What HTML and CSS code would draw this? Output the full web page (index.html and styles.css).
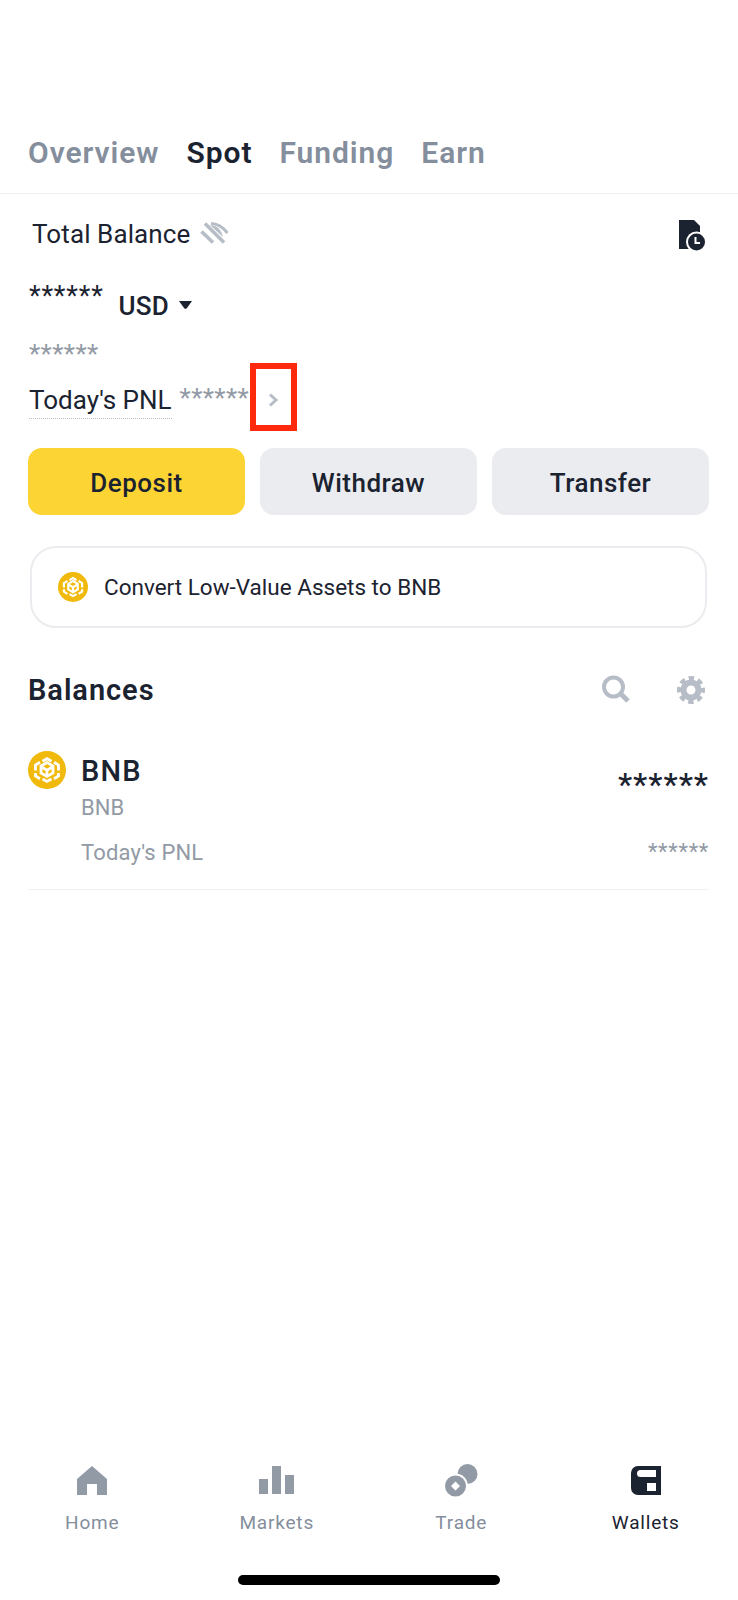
FILE: index.html
```html
<!DOCTYPE html>
<html lang="en">
<head>
    <meta charset="UTF-8">
    <meta name="viewport" content="width=device-width, initial-scale=1.0">
    <title>Wallets</title>
    <link rel="stylesheet" href="styles.css">
</head>
<body>
    <svg class="defs" width="0" height="0">
        <symbol id="bnb" viewBox="0 0 38 38">
            <circle cx="19" cy="19" r="19" fill="#f0b90b"/>
            <g fill="none" stroke="#fff" stroke-width="2.800">
                <path d="M14.500 10.300 19 7.700l4.500 2.600"/>
                <path d="M26 11.300l4.500 2.700v5.500"/>
                <path d="M12 11.300l-4.500 2.700v5.500"/>
                <path d="M7.500 22v3l4.500 2.700"/>
                <path d="M30.500 22v3l-4.500 2.700"/>
                <path d="M14.500 28l4.500 2.500 4.500-2.500"/>
                <path d="M13 15l6-3.500 6 3.500v7l-6 3.500-6-3.500z"/>
                <path d="M13.500 16l5.500 3.200 5.500-3.200M19 19.200V25"/>
            </g>
        </symbol>
    </svg>

    <div class="page">
        <!-- tabs -->
        <div class="tabs">
            <span class="tab">Overview</span>
            <span class="tab active">Spot</span>
            <span class="tab">Funding</span>
            <span class="tab">Earn</span>
        </div>

        <!-- balance -->
        <div class="balance">
            <div class="total-row">
                <div class="total-label">
                    <span>Total Balance</span>
                    <svg class="eye" width="29" height="24" viewBox="0 0 29 24">
                        <g fill="none" stroke="#b7bdc6">
                            <path d="M5 1.500 24 20.500" stroke-width="3.600"/>
                            <path d="M1.500 9.500 13 20.500" stroke-width="3.600"/>
                            <path d="M11 1.500Q20 1.500 27.500 11" stroke-width="3"/>
                        </g>
                        <path d="M10 3Q20 3 23 15z" fill="#b7bdc6"/>
                    </svg>
                </div>
                <svg class="doc" width="27" height="31" viewBox="0 0 27 31">
                    <path d="M0 0H15L21 6V29H0Z" fill="#1b2230"/>
                    <circle cx="17.500" cy="22" r="10.500" fill="#fff"/>
                    <circle cx="17.500" cy="22" r="8.500" fill="#1b2230"/>
                    <path d="M16.500 17V23H21" fill="none" stroke="#fff" stroke-width="2"/>
                </svg>
            </div>
            <div class="amount-row">
                <span class="stars">******</span>
                <span class="currency">USD</span>
                <svg class="caret" width="13" height="8" viewBox="0 0 13 8"><path d="M0 0h13L8 7a2 2 0 0 1-3 0z" fill="#1b2230"/></svg>
            </div>
            <div class="stars-sub">******</div>
            <div class="pnl-row">
                <span class="pnl-label">Today's PNL</span>
                <span class="pnl-stars">******</span>
                <svg class="chevron" width="11" height="14" viewBox="0 0 11 14"><path d="M2 1.500 8 7l-6 5.500" fill="none" stroke="#b7bdc6" stroke-width="3"/></svg>
                <div class="highlight"></div>
            </div>
        </div>

        <div class="actions">
            <div class="btn primary">Deposit</div>
            <div class="btn">Withdraw</div>
            <div class="btn">Transfer</div>
        </div>

        <div class="banner">
            <svg class="banner-icon" width="30" height="30"><use href="#bnb"/></svg>
            <span>Convert Low-Value Assets to BNB</span>
        </div>

        <!-- balances list -->
        <div class="section-head">
            <span class="section-title">Balances</span>
            <div class="section-tools">
                <svg width="30" height="30" viewBox="0 0 30 30">
                    <circle cx="12.500" cy="12" r="9.500" fill="none" stroke="#b7bdc6" stroke-width="4"/>
                    <path d="M20 19l7 7" stroke="#b7bdc6" stroke-width="5"/>
                </svg>
                <svg width="30" height="30" viewBox="0 0 30 30">
                    <circle cx="15" cy="15" r="7.500" fill="none" stroke="#b7bdc6" stroke-width="6"/>
                    <circle cx="15" cy="15" r="12" fill="none" stroke="#b7bdc6" stroke-width="4" stroke-dasharray="5.500 3.925" stroke-dashoffset="2.750"/>
                </svg>
            </div>
        </div>

        <div class="coin">
            <svg class="coin-icon" width="38" height="38"><use href="#bnb"/></svg>
            <div class="coin-body">
                <div class="coin-top">
                    <div>
                        <div class="coin-name">BNB</div>
                        <div class="coin-full">BNB</div>
                    </div>
                    <div class="coin-amount">******</div>
                </div>
                <div class="coin-pnl">
                    <span>Today's PNL</span>
                    <span class="coin-pnl-stars">******</span>
                </div>
            </div>
        </div>

        <!-- bottom nav -->
        <div class="nav">
            <div class="nav-item">
                <div class="nav-icon">
                    <svg width="30" height="29" viewBox="0 0 30 29"><path fill="#929aa5" d="M15 0 30 13V29H20V18H10V29H0V13Z"/></svg>
                </div>
                <span>Home</span>
            </div>
            <div class="nav-item">
                <div class="nav-icon">
                    <svg width="35" height="28" viewBox="0 0 35 28"><path fill="#929aa5" d="M0 13h9v15H0zM13 0h9v28h-9zM26 9h9v19h-9z"/></svg>
                </div>
                <span>Markets</span>
            </div>
            <div class="nav-item">
                <div class="nav-icon">
                    <svg width="33" height="33" viewBox="0 0 33 33">
                        <circle cx="22.500" cy="10" r="10" fill="#929aa5"/>
                        <circle cx="10.500" cy="22" r="12.500" fill="#fff"/>
                        <path fill="#929aa5" fill-rule="evenodd" d="M10.500 11.500a10.500 10.500 0 1 1 0 21 10.500 10.500 0 0 1 0-21zM10.500 17.500l-4.500 4.500 4.500 4.500 4.500-4.500z"/>
                    </svg>
                </div>
                <span>Trade</span>
            </div>
            <div class="nav-item active">
                <div class="nav-icon">
                    <svg width="30" height="29" viewBox="0 0 30 29">
                        <path fill="#1b2230" fill-rule="evenodd" d="M7 0H30V29H7a7 7 0 0 1-7-7V7a7 7 0 0 1 7-7zM9.500 4a3.500 3.500 0 0 0 0 7H25V4zM16 17v8h9v-8z"/>
                    </svg>
                </div>
                <span>Wallets</span>
            </div>
        </div>

        <div class="home-bar"></div>
    </div>
</body>
</html>
```

FILE: styles.css
```css
* {
    margin: 0;
    padding: 0;
    box-sizing: border-box;
}

html, body {
    width: 100%;
    height: 100%;
    background: #ffffff;
    font-family: 'Roboto', 'Liberation Sans', sans-serif;
    color: #1b2230;
    overflow: hidden;
}

.defs {
    position: absolute;
}

.page {
    height: 1600px;
    display: flex;
    flex-direction: column;
}

/* tabs */
.tabs {
    height: 194px;
    padding: 0 29px 22px 28px;
    display: flex;
    align-items: flex-end;
    gap: 27px;
    border-bottom: 1px solid #f1f2f4;
}

.tab {
    font-size: 30px;
    line-height: 36px;
    font-weight: 600;
    letter-spacing: 0.95px;
    color: #848e9c;
}

.tab.active {
    color: #1b2230;
}

/* balance */
.balance {
    padding: 0 29px;
}

.total-row {
    display: flex;
    justify-content: space-between;
    align-items: center;
    height: 30px;
    margin-top: 25px;
    padding-left: 3px;
}

.total-label {
    display: flex;
    align-items: center;
    gap: 10px;
    font-size: 26px;
    letter-spacing: 0.1px;
}

.doc {
    margin-top: 3px;
    margin-right: 3px;
}

.amount-row {
    display: flex;
    align-items: center;
    margin-top: 38px;
    height: 32px;
}

.stars {
    font-size: 27px;
    line-height: 32px;
    letter-spacing: 0.8px;
    margin-top: -14px;
}

.currency {
    margin-left: 15px;
    font-size: 26px;
    font-weight: 480;
    letter-spacing: 0.2px;
    margin-top: 6px;
}

.caret {
    margin-left: 10px;
    margin-top: 4px;
}

.stars-sub {
    margin-top: 20px;
    font-size: 26px;
    line-height: 30px;
    letter-spacing: 0.4px;
    color: #929aa5;
}

.pnl-row {
    position: relative;
    display: flex;
    align-items: center;
    height: 36px;
    margin-top: 12px;
}

.pnl-label {
    font-size: 26px;
    line-height: 35px;
    margin-top: 3px;
    border-bottom: 1px dotted #b7bdc6;
}

.pnl-stars {
    margin-left: 8px;
    font-size: 26px;
    letter-spacing: 0.4px;
    color: #929aa5;
    margin-top: -2px;
}

.chevron {
    margin-left: 19px;
    margin-top: 2px;
}

/* red marker round the chevron */
.highlight {
    position: absolute;
    left: 221px;
    top: -18px;
    width: 47px;
    height: 68px;
    border: 6px solid #ff2a0c;
}

/* buttons */
.actions {
    display: grid;
    grid-template-columns: repeat(3, 1fr);
    gap: 15px;
    padding: 0 29px 0 28px;
    margin-top: 31px;
}

.btn {
    height: 67px;
    border-radius: 14px;
    background: #eaecef;
    display: flex;
    justify-content: center;
    align-items: center;
    font-size: 26px;
    font-weight: 480;
    letter-spacing: 0.5px;
    padding-top: 2px;
}

.btn.primary {
    background: #fcd535;
}

/* banner */
.banner {
    height: 82px;
    margin: 31px 31px 0 30px;
    border: 2px solid #eaecef;
    border-radius: 26px;
    padding-left: 26px;
    display: flex;
    align-items: center;
    gap: 16px;
    font-size: 22.500px;
}

/* balances */
.section-head {
    display: flex;
    justify-content: space-between;
    align-items: center;
    height: 36px;
    margin-top: 44px;
    padding: 0 32px 0 28px;
}

.section-title {
    font-size: 29px;
    font-weight: 600;
    letter-spacing: 0.95px;
}

.section-tools {
    display: flex;
    gap: 45px;
}

.coin {
    display: flex;
    gap: 15px;
    margin: 43px 29px 0 28px;
    padding-bottom: 22px;
    border-bottom: 1px solid #f1f2f4;
}

.coin-body {
    flex: 1;
}

.coin-top {
    display: flex;
    justify-content: space-between;
    align-items: center;
}

.coin-name {
    font-size: 29px;
    line-height: 36px;
    font-weight: 480;
    letter-spacing: 1.200px;
    margin-top: 2px;
}

.coin-full {
    font-size: 22px;
    line-height: 28px;
    margin-top: 5px;
    color: #929aa5;
}

.coin-amount {
    font-size: 32px;
    font-weight: 500;
    letter-spacing: 1px;
    margin-top: -6px;
}

.coin-pnl {
    display: flex;
    justify-content: space-between;
    align-items: center;
    margin-top: 17px;
    font-size: 22px;
    line-height: 28px;
    letter-spacing: 0.15px;
    color: #929aa5;
}

.coin-pnl-stars {
    margin-top: -2px;
    letter-spacing: 0.7px;
}

/* bottom nav */
.nav {
    margin-top: auto;
    display: grid;
    grid-template-columns: repeat(4, 1fr);
}

.nav-item {
    display: flex;
    flex-direction: column;
    align-items: center;
    font-size: 19px;
    letter-spacing: 0.8px;
    color: #848e9c;
}

.nav-icon {
    height: 34px;
    margin-bottom: 14px;
    display: flex;
    align-items: center;
}

.nav-item.active {
    color: #1b2230;
}

.home-bar {
    width: 262px;
    height: 10px;
    margin: 41px auto 15px;
    border-radius: 5px;
    background: #000000;
}
```
